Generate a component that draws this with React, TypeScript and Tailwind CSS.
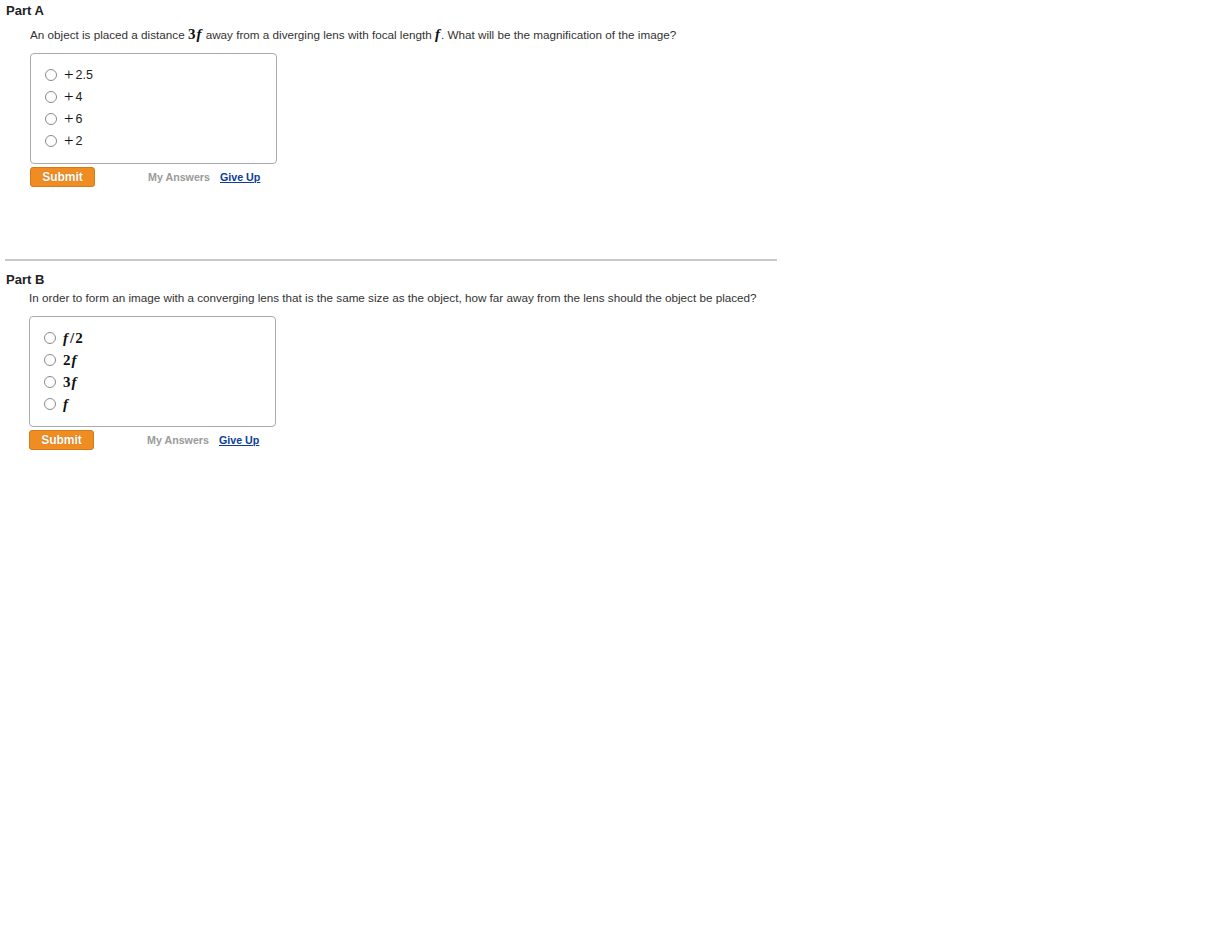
import React from "react";

function Radio() {
  return <span className="inline-block w-[12px] h-[12px] rounded-full border border-[#8a8a8a] bg-white shrink-0" />;
}

function Option({ children }: { children: React.ReactNode }) {
  return (
    <div className="flex items-center h-[22px] pl-[1px]">
      <Radio />
      <span className="ml-[7px] flex items-center">{children}</span>
    </div>
  );
}

function Actions() {
  return (
    <div className="flex items-center mt-[3px] h-[20px]">
      <button className="w-[65px] h-[20px] rounded-[3px] bg-[#ef8c22] border border-[#d37a1c] text-white font-bold text-[12px] leading-[18px] [text-shadow:0_0_1px_rgba(0,0,0,0.25)]">
        Submit
      </button>
      <span className="ml-[53px] text-[10.7px] font-bold text-[#9a9a9a]">My Answers</span>
      <span className="ml-[10px] text-[10.7px] font-bold text-[#0b3e9a] underline">Give Up</span>
    </div>
  );
}

const math = "font-['Liberation_Serif','DejaVu_Serif',serif] text-[#111]";

function Plus({ n }: { n: string }) {
  return (
    <span className="flex items-center text-[12.5px] text-[#222]">
      <span className={`${math} text-[17px] leading-[16px]`}>+</span>
      <span className="ml-[2px]">{n}</span>
    </span>
  );
}

function F() {
  return <i className="pr-[1px]">f</i>;
}

export default function App() {
  return (
    <div className="w-[1212px] h-[930px] bg-white font-['Liberation_Sans',Arial,sans-serif] text-[#333]">
      <div className="pt-[3px]">
        <h3 className="pl-[6px] text-[13px] font-bold leading-[16px] text-[#222]">Part A</h3>
        <div className="ml-[30px]">
          <p className="mt-[8px] h-[16px] text-[11.7px] leading-[16px] text-[#333]">
            An object is placed a distance{" "}
            <span className={`${math} text-[15px] leading-[10px] font-bold`}>
              3<span className="ml-[1px]"><F /></span>
            </span>{" "}
            away from a diverging lens with focal length{" "}
            <span className={`${math} text-[15px] leading-[10px] font-bold`}>
              <F />
            </span>
            . What will be the magnification of the image?
          </p>
          <div className="mt-[10px] w-[247px] h-[111px] border border-[#aaaaaa] rounded-[4px] pt-[10px] pl-[13px]">
            <Option><Plus n="2.5" /></Option>
            <Option><Plus n="4" /></Option>
            <Option><Plus n="6" /></Option>
            <Option><Plus n="2" /></Option>
          </div>
          <Actions />
        </div>
      </div>

      <div className="mt-[72px] ml-[5px] w-[772px] h-[2px] bg-[#c8c8c8]" />

      <div className="mt-[11px]">
        <h3 className="pl-[6px] text-[13px] font-bold leading-[16px] text-[#222]">Part B</h3>
        <div className="ml-[29px]">
          <p className="mt-[2px] h-[16px] text-[11.7px] leading-[16px] text-[#333]">
            In order to form an image with a converging lens that is the same size as the object, how far away from the lens should the object be placed?
          </p>
          <div className="mt-[10px] w-[247px] h-[111px] border border-[#aaaaaa] rounded-[4px] pt-[10px] pl-[13px]">
            <Option><span className={`${math} text-[15px] font-bold`}><F /><span className="mx-[1px]">/</span>2</span></Option>
            <Option><span className={`${math} text-[15px] font-bold`}>2<span className="ml-[1px]"><F /></span></span></Option>
            <Option><span className={`${math} text-[15px] font-bold`}>3<span className="ml-[1px]"><F /></span></span></Option>
            <Option><span className={`${math} text-[15px] font-bold`}><F /></span></Option>
          </div>
          <Actions />
        </div>
      </div>
    </div>
  );
}
